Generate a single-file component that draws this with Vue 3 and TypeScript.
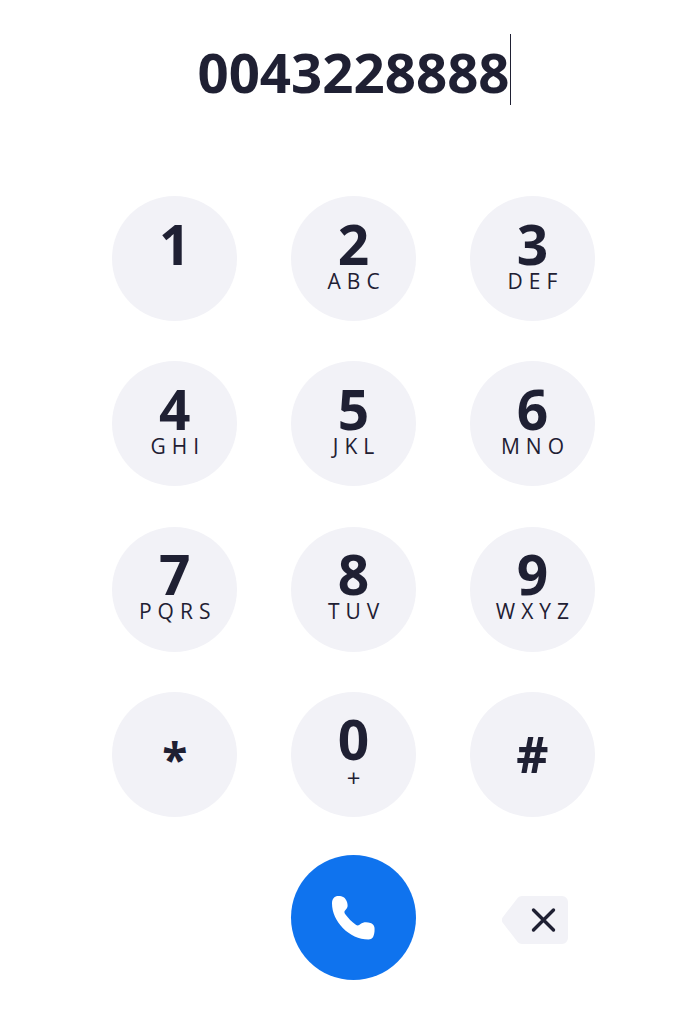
<script setup lang="ts">
interface Key { digit: string; letters: string; kind?: string }
const keys: Key[] = [
  { digit: '1', letters: '' },
  { digit: '2', letters: 'ABC' },
  { digit: '3', letters: 'DEF' },
  { digit: '4', letters: 'GHI' },
  { digit: '5', letters: 'JKL' },
  { digit: '6', letters: 'MNO' },
  { digit: '7', letters: 'PQRS' },
  { digit: '8', letters: 'TUV' },
  { digit: '9', letters: 'WXYZ' },
  { digit: '*', letters: '', kind: 'star' },
  { digit: '0', letters: '+', kind: 'zero' },
  { digit: '#', letters: '', kind: 'hash' },
]
</script>

<template>
  <main class="dialer">
    <div class="display">
      <span class="number">0043228888</span><span class="caret"></span>
    </div>
    <div class="pad">
      <button v-for="k in keys" :key="k.digit" class="key" type="button" :class="k.kind">
        <span class="digit">{{ k.digit }}</span>
        <span v-if="k.kind !== 'star' && k.kind !== 'hash'" class="letters">{{ k.letters }}</span>
      </button>
    </div>
    <div class="actions">
      <span></span>
      <button class="call" type="button" aria-label="Call">
        <svg width="60" height="60" viewBox="-0.5 -2.5 60 60" fill="#fff">
          <path d="M7.500 14C7.500 9 10 6.500 14 6.500C18 6.500 21 8 22.500 12.500C23.500 16 23.500 18 21 20.500C19.500 22 19.500 23 21 25C24 29 27 32 31 35C33 36.500 34.500 36 36 34.500C38.500 32.500 42 32 46 33.500C49.500 35 50.500 37 50 42C49.500 47 48 50 44 50C25 50 7.500 32 7.500 14Z" />
        </svg>
      </button>
      <button class="backspace" type="button" aria-label="Delete">
        <svg width="68" height="48" viewBox="0 0 68 48">
          <path d="M21 0h40a6 6 0 0 1 6 6v36a6 6 0 0 1-6 6H21a6 6 0 0 1-4.200-1.700L2.300 27.500a5 5 0 0 1 0-7L16.800 1.700A6 6 0 0 1 21 0z" fill="#f2f2f7"/>
          <path d="M32.500 14l20 20M52.500 14l-20 20" stroke="#1f2033" stroke-width="3.400" stroke-linecap="round" fill="none"/>
        </svg>
      </button>
    </div>
  </main>
</template>

<style scoped>
.dialer {
  width: 674px;
  height: 1024px;
  box-sizing: border-box;
  padding-top: 34px;
  overflow: hidden;
  font-family: "Open Sans", "Noto Sans", sans-serif;
  color: #1f2033;
  background: #fff;
}
.display {
  height: 71px;
  display: flex;
  justify-content: center;
  align-items: center;
  margin-bottom: 91px;
  padding-left: 34px;
}
.number {
  font-size: 54.6px;
  font-weight: 700;
  line-height: 71px;
  margin-top: 5px;
}
.caret {
  width: 1px;
  height: 71px;
  background: #1f2033;
}
.pad {
  display: grid;
  grid-template-columns: repeat(3, 125px);
  column-gap: 53.9px;
  row-gap: 40.3px;
  margin-left: 112.2px;
}
.key {
  width: 125px;
  height: 125px;
  border: 0;
  border-radius: 50%;
  padding: 0 0 6px;
  background: #f2f2f7;
  color: inherit;
  font-family: inherit;
  display: flex;
  flex-direction: column;
  align-items: center;
  justify-content: center;
}
.key.star, .key.hash { padding: 0; }
.key.star { padding-top: 10px; }
.key.star .digit { font-size: 46px; }
.key.hash .digit { font-size: 50px; }
.digit {
  font-size: 55px;
  font-weight: 700;
  line-height: 50px;
}
.letters {
  font-size: 21px;
  line-height: 24px;
  letter-spacing: 6px;
  margin-right: -6px;
  height: 24px;
}
.key.zero .letters {
  font-size: 24px;
  line-height: 27px;
}
.actions {
  display: grid;
  grid-template-columns: repeat(3, 125px);
  column-gap: 53.9px;
  margin: 38px 0 0 112.2px;
  align-items: center;
}
.call {
  width: 125px;
  height: 125px;
  border: 0;
  border-radius: 50%;
  background: #0f73ee;
  padding: 0;
  display: flex;
  align-items: center;
  justify-content: center;
}
.backspace {
  border: 0;
  background: none;
  padding: 0;
  display: flex;
  justify-content: center;
  margin: 6px 0 0 6px;
}
</style>

<style>
html, body { margin: 0; background: #fff; }
</style>
